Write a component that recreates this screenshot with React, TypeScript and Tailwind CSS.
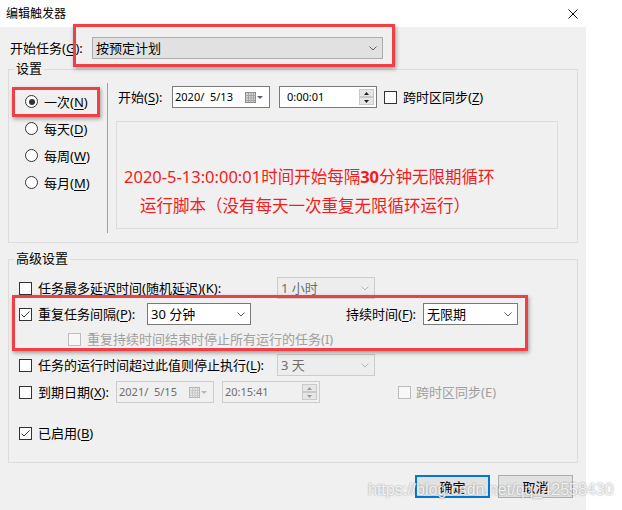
import React from 'react';

function Acc({ k }: { k: string }) {
  return <span className="underline underline-offset-[2px]">{k}</span>;
}

function Chevron({ color }: { color: string }) {
  return (
    <svg width="8" height="5" viewBox="0 0 8 5" className="shrink-0">
      <path d="M0.5 0.5 L4 4 L7.5 0.5" fill="none" stroke={color} strokeWidth="1" />
    </svg>
  );
}

function Check({ on, off }: { on?: boolean; off?: boolean }) {
  return (
    <span
      className={`flex h-[13px] w-[13px] shrink-0 items-center justify-center border ${
        off ? 'border-[#bcbcbc] bg-[#f7f7f7]' : 'border-[#333333] bg-white'
      }`}
    >
      {on && (
        <svg width="11" height="11" viewBox="0 0 11 11">
          <path d="M1.5 5.5 L4 8 L9.5 2.5" fill="none" stroke="#3c3c3c" strokeWidth="1" />
        </svg>
      )}
    </span>
  );
}

function Radio({ on }: { on?: boolean }) {
  return (
    <span className="flex h-[13px] w-[13px] shrink-0 items-center justify-center rounded-full border border-[#333333] bg-white">
      {on && <span className="h-[6px] w-[6px] rounded-full bg-[#333333]" />}
    </span>
  );
}

function Combo({ w, value, tone }: { w: string; value: string; tone: 'button' | 'edit' | 'off' }) {
  const box =
    tone === 'button'
      ? 'border-[#adadad] bg-[#e1e1e1]'
      : tone === 'edit'
        ? 'border-[#7a7a7a] bg-white'
        : 'border-[#cccccc] bg-[#ededed] text-[#6d6d6d]';
  return (
    <div className={`flex h-[22px] shrink-0 items-center justify-between border pl-[3px] pr-[5px] ${w} ${box}`}>
      <span>{value}</span>
      <Chevron color={tone === 'off' ? '#b8b8b8' : '#606060'} />
    </div>
  );
}

function CalIcon({ off }: { off?: boolean }) {
  return (
    <svg width="18" height="11" viewBox="0 0 18 11" className="shrink-0">
      <rect x="0.5" y="0.5" width="10" height="10" fill={off ? '#e6e6e6' : '#d6d6d6'} stroke={off ? '#b5b5b5' : '#8a8a8a'} />
      <path
        d="M0.5 3.5h10M0.5 6h10M0.5 8.5h10M3.5 0.5v10M6 0.5v10M8.5 0.5v10"
        stroke={off ? '#c8c8c8' : '#a4a4a4'}
        strokeWidth="1"
      />
      <path d="M12 4h6l-3 3z" fill={off ? '#b5b5b5' : '#56606e'} />
    </svg>
  );
}

function DateBox({ value, off }: { value: string; off?: boolean }) {
  return (
    <div
      className={`flex h-[22px] w-[98px] shrink-0 items-center border pl-[2px] pr-[6px] text-[11px] ${
        off ? 'border-[#cccccc] text-[#6d6d6d]' : 'border-[#7a7a7a] bg-white'
      }`}
    >
      <span className="flex-1 whitespace-pre">{value}</span>
      <CalIcon off={off} />
    </div>
  );
}

function SpinBtn({ up, off }: { up?: boolean; off?: boolean }) {
  return (
    <span className="flex h-[8px] w-[15px] items-center justify-center border border-[#c9c9c9] bg-[#e6e6e6]">
      <svg width="5" height="3" viewBox="0 0 5 3">
        <path d={up ? 'M0 3h5L2.5 0z' : 'M0 0h5L2.5 3z'} fill={off ? '#9a9a9a' : '#202020'} />
      </svg>
    </span>
  );
}

function TimeBox({ value, off, pl }: { value: string; off?: boolean; pl: string }) {
  return (
    <div
      className={`flex h-[22px] w-[98px] shrink-0 items-center border pr-[2px] text-[11px] ${pl} ${
        off ? 'border-[#cccccc] text-[#6d6d6d]' : 'border-[#7a7a7a] bg-white'
      }`}
    >
      <span className="flex-1">{value}</span>
      <div className="flex flex-col">
        <SpinBtn up off={off} />
        <SpinBtn off={off} />
      </div>
    </div>
  );
}

function Group({ title, className, children }: { title: string; className: string; children: React.ReactNode }) {
  return (
    <div className={`border border-[#dcdcdc] ${className}`}>
      <div className="-mt-[10px] ml-[5px] w-fit bg-[#f0f0f0] px-[2px] leading-[16px]">{title}</div>
      {children}
    </div>
  );
}

function Mark({ className }: { className: string }) {
  return (
    <div
      className={`pointer-events-none absolute border-[3px] border-[#ee4045] shadow-[1px_2px_4px_rgba(0,0,0,0.35)] ${className}`}
    />
  );
}

export default function App() {
  return (
    <div className="relative flex h-[510px] w-[622px] overflow-hidden bg-white font-['Noto_Sans','Noto_Sans_CJK_SC',sans-serif] text-[13px] leading-[18px] text-black">
      <div className="flex w-[586px] flex-col">
        <div className="flex h-[27px] items-center justify-between bg-white pl-[6px] pr-[8px]">
          <span className="text-[12px]">编辑触发器</span>
          <svg width="10" height="10" viewBox="0 0 10 10">
            <path d="M0.5 0.5 L9.5 9.5 M9.5 0.5 L0.5 9.5" stroke="#111" strokeWidth="1" />
          </svg>
        </div>

        <div className="flex flex-1 flex-col bg-[#f0f0f0] px-[8px]">
          <div className="mt-[10px] flex h-[22px] items-center">
            <span className="w-[84px] pl-[2px]">
              开始任务(<Acc k="G" />):
            </span>
            <Combo w="w-[291px]" value="按预定计划" tone="button" />
          </div>

          <Group title="设置" className="mt-[10px]">
            <div className="mt-[7px] flex h-[150px]">
              <div className="flex w-[99px] flex-col border-r border-[#a0a0a0] pl-[16px] pt-[5px]">
                {[
                  ['一次', 'N', true],
                  ['每天', 'D', false],
                  ['每周', 'W', false],
                  ['每月', 'M', false],
                ].map(([label, key, on]) => (
                  <div key={key as string} className="flex h-[27px] items-center gap-[6px]">
                    <Radio on={on as boolean} />
                    <span>
                      {label}(<Acc k={key as string} />)
                    </span>
                  </div>
                ))}
              </div>

              <div className="flex flex-1 flex-col pl-[8px]">
                <div className="mt-[3px] flex h-[22px] items-center">
                  <span className="w-[56px] pl-[2px]">
                    开始(<Acc k="S" />):
                  </span>
                  <DateBox value="2020/  5/13" />
                  <div className="ml-[9px]">
                    <TimeBox value="0:00:01" pl="pl-[7px]" />
                  </div>
                  <div className="ml-[7px] flex items-center gap-[6px]">
                    <Check />
                    <span>
                      跨时区同步(<Acc k="Z" />)
                    </span>
                  </div>
                </div>

                <div className="mt-[13px] h-[108px] w-[442px] border border-[#dcdcdc] pt-[40px] text-[16.5px] leading-[29px] text-[#f41c1c]">
                  <div className="pl-[7px]">
                    2020-5-13:0:00:01时间开始每隔<span className="font-bold">30</span>分钟无限期循环
                  </div>
                  <div className="pl-[23px]">运行脚本（没有每天一次重复无限循环运行）</div>
                </div>
              </div>
            </div>
            <div className="h-[9px]" />
          </Group>

          <Group title="高级设置" className="mt-[16px] pb-[18px]">
            <div className="mt-[11px] flex h-[22px] items-center pl-[10px]">
              <Check />
              <span className="ml-[6px] w-[239px]">
                任务最多延迟时间(随机延迟)(<Acc k="K" />):
              </span>
              <Combo w="w-[98px]" value="1 小时" tone="off" />
            </div>

            <div className="mt-[4px] flex h-[22px] items-center pl-[10px]">
              <Check on />
              <span className="ml-[6px] w-[109px]">
                重复任务间隔(<Acc k="P" />):
              </span>
              <Combo w="w-[104px]" value="30 分钟" tone="edit" />
              <span className="ml-[95px] w-[77px]">
                持续时间(<Acc k="F" />):
              </span>
              <Combo w="w-[95px]" value="无限期" tone="edit" />
            </div>

            <div className="mt-[3px] flex h-[22px] items-center pl-[59px]">
              <Check off />
              <span className="ml-[6px] text-[#a0a0a0]">重复持续时间结束时停止所有运行的任务(I)</span>
            </div>

            <div className="mt-[4px] flex h-[22px] items-center pl-[10px]">
              <Check />
              <span className="ml-[6px] w-[239px]">
                任务的运行时间超过此值则停止执行(<Acc k="L" />):
              </span>
              <Combo w="w-[98px]" value="3 天" tone="off" />
            </div>

            <div className="mt-[5px] flex h-[22px] items-center pl-[10px]">
              <Check />
              <span className="ml-[6px] w-[78px]">
                到期日期(<Acc k="X" />):
              </span>
              <DateBox value="2021/  5/15" off />
              <div className="ml-[8px]">
                <TimeBox value="20:15:41" pl="pl-[2px]" off />
              </div>
              <div className="ml-[78px] flex items-center gap-[5px]">
                <Check off />
                <span className="text-[#a0a0a0]">跨时区同步(E)</span>
              </div>
            </div>

            <div className="mt-[19px] flex h-[22px] items-center pl-[10px]">
              <Check on />
              <span className="ml-[6px]">
                已启用(<Acc k="B" />)
              </span>
            </div>
          </Group>

          <div className="mt-[12px] flex justify-end gap-[8px] pr-[5px]">
            <button className="flex h-[23px] w-[75px] items-center justify-center border-2 border-[#0078d7] bg-[#e1e1e1]">
              确定
            </button>
            <button className="flex h-[23px] w-[75px] items-center justify-center border border-[#adadad] bg-[#e1e1e1]">
              取消
            </button>
          </div>
        </div>
      </div>

      <Mark className="left-[73px] top-[24px] h-[43px] w-[322px]" />
      <Mark className="left-[12px] top-[87px] h-[30px] w-[88px]" />
      <Mark className="left-[12px] top-[295px] h-[56px] w-[516px]" />

      <div className="pointer-events-none absolute left-[368px] top-[480px] font-['Liberation_Sans',sans-serif] text-[16px] leading-[20px] text-white/85 [text-shadow:0_0_2px_rgba(0,0,0,0.45)]">
        https://blog.csdn.net/qq_42558430
      </div>
    </div>
  );
}
